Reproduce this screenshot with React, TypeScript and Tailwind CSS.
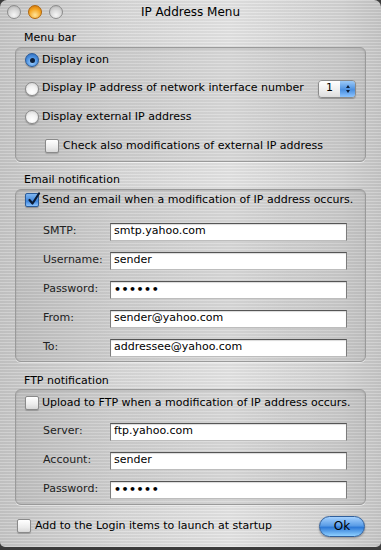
import React from "react"

const font = "font-['Lucida_Grande','DejaVu_Sans',sans-serif]"

function Radio({ checked }: { checked?: boolean }) {
  if (checked) {
    return (
      <span className="flex h-[14px] w-[14px] shrink-0 items-center justify-center rounded-full border border-[#2b5c9a] bg-[radial-gradient(circle_at_50%_70%,#9fd0ff_0%,#4a90e0_55%,#2a64b4_100%)] shadow-[0_1px_1px_rgba(0,0,0,0.3)]">
        <span className="h-[5px] w-[5px] rounded-full bg-[#0d1f3a]" />
      </span>
    )
  }
  return (
    <span className="h-[14px] w-[14px] shrink-0 rounded-full border border-[#8a8a8a] bg-[radial-gradient(circle_at_50%_75%,#ffffff_0%,#f2f2f2_50%,#cfcfcf_100%)] shadow-[0_1px_1px_rgba(0,0,0,0.25)]" />
  )
}

function Check({ checked }: { checked?: boolean }) {
  if (checked) {
    return (
      <span className="relative flex h-[14px] w-[14px] shrink-0 items-center justify-center rounded-[2px] border border-[#2b5c9a] bg-[linear-gradient(#7fb6f0,#3f86dc_60%,#8cc4ff)] shadow-[0_1px_1px_rgba(0,0,0,0.3)]">
        <svg width="14" height="14" viewBox="0 0 14 14" className="absolute -top-[2px] left-[1px]">
          <path d="M2.5 8 L5.5 11.5 L12 1.5" fill="none" stroke="#0a1a33" strokeWidth="2.2" strokeLinecap="round" strokeLinejoin="round" />
        </svg>
      </span>
    )
  }
  return (
    <span className="h-[14px] w-[14px] shrink-0 rounded-[2px] border border-[#8a8a8a] bg-[linear-gradient(#ffffff,#ececec_60%,#d8d8d8)] shadow-[0_1px_1px_rgba(0,0,0,0.2)]" />
  )
}

function Field({ label, value, password }: { label: string; value: string; password?: boolean }) {
  return (
    <div className="flex h-[29px] items-center pl-[27px]">
      <span className="w-[67px] shrink-0 text-[#222]">{label}</span>
      <div className="flex h-[18px] w-[237px] items-center border border-[#7c7c7c] border-t-[#555] border-b-[#bdbdbd] bg-white pl-[3px] text-[11px] shadow-[inset_0_1px_1px_rgba(0,0,0,0.15)]">
        {password ? <span className="text-[11px] font-bold leading-none tracking-[0.5px]">••••••</span> : value}
      </div>
    </div>
  )
}

function Box({ children, className }: { children: React.ReactNode; className: string }) {
  return (
    <div className={`rounded-[6px] border border-[#9a9a9a] bg-black/[0.045] shadow-[inset_0_1px_2px_rgba(0,0,0,0.12),0_1px_0_rgba(255,255,255,0.5)] ${className}`}>
      {children}
    </div>
  )
}

export default function App() {
  return (
    <div className={`h-[550px] w-[381px] overflow-hidden bg-[#3c3c3c] ${font} text-[11px] text-black`}>
      <div className="h-[547px] w-[381px] rounded-t-[7px] rounded-b-[5px] bg-[repeating-linear-gradient(0deg,rgba(255,255,255,0.18)_0px,rgba(255,255,255,0.18)_1px,rgba(0,0,0,0.035)_1px,rgba(0,0,0,0.035)_3px),linear-gradient(90deg,#c6c6c6,#d8d8d8_30%,#e4e4e4_60%,#d2d2d2_90%,#c6c6c6)]">
        {/* title bar */}
        <div className="relative flex h-[24px] items-center justify-center">
          <div className="absolute left-[7px] top-[5px] flex gap-[7px]">
            <span className="h-[14px] w-[14px] rounded-full border border-[#8c8c8c] bg-[radial-gradient(circle_at_50%_75%,#f6f6f6,#d4d4d4_55%,#a8a8a8)]" />
            <span className="h-[14px] w-[14px] rounded-full border border-[#b0650a] bg-[radial-gradient(circle_at_50%_75%,#ffe49a,#f5a623_55%,#c86b05)]" />
            <span className="h-[14px] w-[14px] rounded-full border border-[#8c8c8c] bg-[radial-gradient(circle_at_50%_75%,#f6f6f6,#d4d4d4_55%,#a8a8a8)]" />
          </div>
          <span className="text-[12px]">IP Address Menu</span>
        </div>

        <div className="px-[15px]">
          {/* Menu bar */}
          <div className="mt-[6px] h-[16px] pl-[9px] leading-[16px]">Menu bar</div>
          <Box className="mt-[1px] flex h-[115px] flex-col gap-[4.7px] pl-[9px]">
            <div className="flex h-[24px] items-center gap-[3px]">
              <Radio checked />
              <span>Display icon</span>
            </div>
            <div className="flex h-[24px] items-center gap-[3px]">
              <Radio />
              <span>Display IP address of network interface number</span>
              <div className="ml-auto mr-[9px] flex h-[18px] w-[38px] overflow-hidden rounded-[4px] border border-[#8a8a8a] shadow-[0_1px_1px_rgba(0,0,0,0.25)]">
                <div className="flex w-[21px] items-center justify-center bg-[linear-gradient(#ffffff,#f0f0f0_50%,#dcdcdc)]">1</div>
                <div className="flex flex-1 flex-col items-center justify-center gap-[2px] bg-[linear-gradient(#9ccaf8,#4a8fe0_55%,#8cc4ff)]">
                  <span className="h-0 w-0 border-x-[2.5px] border-b-[3px] border-x-transparent border-b-[#0d1f3a]" />
                  <span className="h-0 w-0 border-x-[2.5px] border-t-[3px] border-x-transparent border-t-[#0d1f3a]" />
                </div>
              </div>
            </div>
            <div className="flex h-[24px] items-center gap-[3px]">
              <Radio />
              <span>Display external IP address</span>
            </div>
            <div className="flex h-[24px] items-center gap-[4px] pl-[20px]">
              <Check />
              <span>Check also modifications of external IP address</span>
            </div>
          </Box>

          {/* Email notification */}
          <div className="mt-[10px] h-[16px] pl-[9px] leading-[16px]">Email notification</div>
          <Box className="mt-[1px] h-[173px]">
            <div className="flex h-[20px] items-center gap-[3px] pl-[9px]">
              <Check checked />
              <span>Send an email when a modification of IP address occurs.</span>
            </div>
            <div className="mt-[7px]">
              <Field label="SMTP:" value="smtp.yahoo.com" />
              <Field label="Username:" value="sender" />
              <Field label="Password:" value="" password />
              <Field label="From:" value="sender@yahoo.com" />
              <Field label="To:" value="addressee@yahoo.com" />
            </div>
          </Box>

          {/* FTP notification */}
          <div className="mt-[11px] h-[16px] pl-[9px] leading-[16px]">FTP notification</div>
          <Box className="h-[116px]">
            <div className="flex h-[26px] items-center gap-[3px] pl-[9px]">
              <Check />
              <span>Upload to FTP when a modification of IP address occurs.</span>
            </div>
            <div className="mt-[1px]">
              <Field label="Server:" value="ftp.yahoo.com" />
              <Field label="Account:" value="sender" />
              <Field label="Password:" value="" password />
            </div>
          </Box>

          {/* bottom row */}
          <div className="mt-[10px] flex h-[22px] items-center pl-[2px]">
            <Check />
            <span className="ml-[4px]">Add to the Login items to launch at startup</span>
            <button className="ml-auto mr-[1px] h-[21px] w-[46px] rounded-full border border-[#2f5f9c] bg-[linear-gradient(#a6d2ff,#5b9de6_45%,#2f7bd8_55%,#8fd0ff)] text-[12px] shadow-[0_1px_2px_rgba(0,0,0,0.35)]">
              Ok
            </button>
          </div>
        </div>
      </div>
    </div>
  )
}
